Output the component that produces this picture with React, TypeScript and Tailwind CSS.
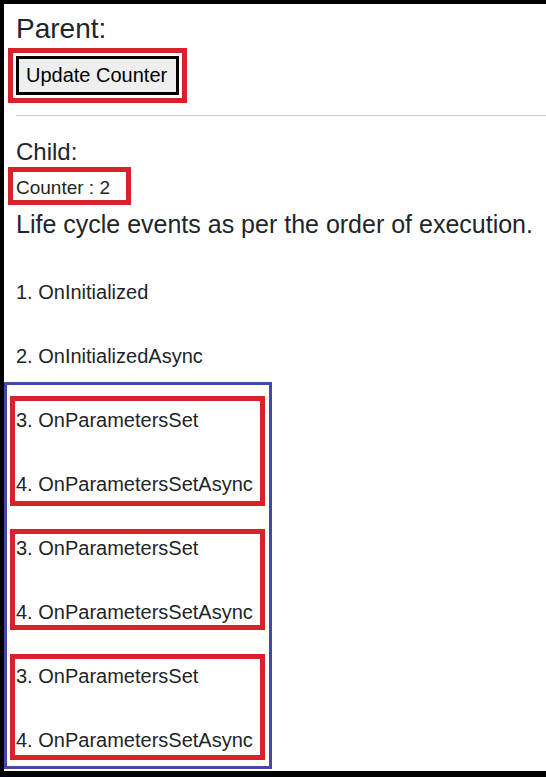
export default function App() {
  const pairs = [
    { box: 'mt-[11px] pt-[7px] pb-[5px]' },
    { box: 'mt-[23px] pt-[2px] pb-[1px]' },
    { box: 'mt-[24px] pt-[5px] pb-[3px]' },
  ];

  return (
    <div className="h-[777px] overflow-hidden border-t-4 border-l-4 border-b-[6px] border-black bg-white font-['Liberation_Sans',Arial,sans-serif] text-[#212529]">
      <div className="pl-3">
        <h3 className="mt-[8px] text-[28px] leading-[34px]">Parent:</h3>
        <div className="mt-[2px] -ml-2 w-[179px] border-[5px] border-[#d8222b] p-[3px]">
          <button className="block h-[39px] w-[163px] border-[3px] border-black bg-[#efefef] px-[7px] text-left text-[20px] leading-[33px] text-black">
            Update Counter
          </button>
        </div>
        <hr className="mt-3 border-[#cccccc]" />
        <h4 className="mt-[21px] text-[24px] leading-[29px]">Child:</h4>
        <div className="mt-px -ml-2 h-[38px] w-[123px] border-[5px] border-[#d8222b] pl-[3px] pt-[4px] text-[19px] leading-[24px]">
          Counter : 2
        </div>
        <h4 className="mt-[4px] text-[25px] leading-[30px]">Life cycle events as per the order of execution.</h4>
        <p className="mt-[41px] text-[20px] leading-[24px]">1. OnInitialized</p>
        <p className="mt-10 text-[20px] leading-[24px]">2. OnInitializedAsync</p>
      </div>

      <div className="mt-[14px] w-[268px] border-[3px] border-[#4548a8] pb-[6px]">
        {pairs.map((p, i) => (
          <div key={i} className={`ml-[3px] w-[255px] border-[5px] border-[#d8222b] pl-px ${p.box}`}>
            <p className="text-[20px] leading-[24px]">3. OnParametersSet</p>
            <p className="mt-10 text-[20px] leading-[24px]">4. OnParametersSetAsync</p>
          </div>
        ))}
      </div>
    </div>
  );
}
